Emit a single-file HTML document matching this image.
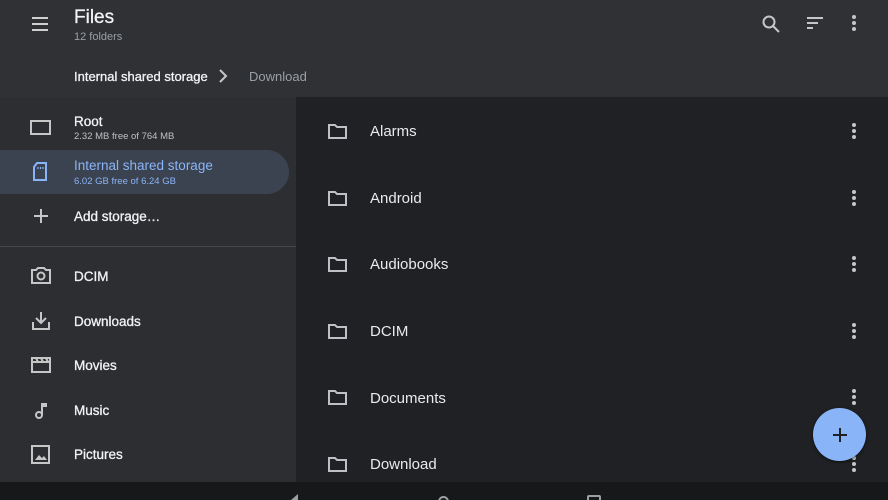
<!DOCTYPE html>
<html><head><style>
*{margin:0;padding:0;box-sizing:border-box}
html,body{width:888px;height:500px;overflow:hidden}
body{background:#202124;font-family:"Liberation Sans",sans-serif;color:#e8eaed;position:relative}
.hdr{position:absolute;left:0;top:0;width:888px;height:97px;background:#303134}
.side{position:absolute;left:0;top:97px;width:296px;height:386px;background:#2d2e31}
.nav{position:absolute;left:0;top:482px;width:888px;height:18px;background:#17181a;overflow:hidden}
.t{position:absolute;white-space:nowrap}
svg{position:absolute}
.ic{fill:none;stroke:#c4c7c5;stroke-width:2}
.it{font-size:13.5px;color:#f1f3f4;-webkit-text-stroke:0.3px #f1f3f4}
.sub{font-size:9.5px;color:#bdc1c6}
.fn{font-size:15px;color:#e8eaed}
</style></head><body>
<div class="hdr"></div>
<div class="side"></div>
<div class="nav">
<svg style="left:288px;top:12px" width="14" height="6"><path d="M10 0L3 6h7z" fill="#9aa0a6"/></svg>
<div style="position:absolute;left:438px;top:14px;width:11px;height:11px;border-radius:50%;border:2px solid #9aa0a6"></div>
<div style="position:absolute;left:587px;top:13px;width:14px;height:10px;border:2px solid #9aa0a6;border-radius:2px"></div>
</div>
<!-- header -->
<svg style="left:30px;top:15px" width="20" height="18"><path d="M2 3h16M2 9h16M2 15h16" stroke="#d0d0d0" stroke-width="2"/></svg>
<div class="t" style="left:74px;top:7px;font-size:19px;color:#f1f3f4;-webkit-text-stroke:0.3px #f1f3f4">Files</div>
<div class="t" style="left:74px;top:31px;font-size:11px;color:#9aa0a6">12 folders</div>
<svg style="left:760px;top:13px" width="22" height="22"><circle cx="9" cy="9" r="5.5" class="ic"/><path d="M13 13l6 6" class="ic"/></svg>
<svg style="left:805px;top:14px" width="22" height="20"><path d="M2 4h16M2 9h11M2 14h6" class="ic"/></svg>
<svg style="left:848px;top:13px" width="12" height="22"><circle cx="6" cy="4" r="2" fill="#c4c7c5"/><circle cx="6" cy="10" r="2" fill="#c4c7c5"/><circle cx="6" cy="16" r="2" fill="#c4c7c5"/></svg>
<div class="t it" style="left:74px;top:69px;font-size:13px">Internal shared storage</div>
<svg style="left:216px;top:68px" width="14" height="16"><path d="M4 2l6 6-6 6" class="ic" stroke="#e8eaed"/></svg>
<div class="t" style="left:249px;top:69px;font-size:13px;color:#9aa0a6">Download</div>
<!-- sidebar -->
<svg style="left:29px;top:118px" width="24" height="20"><rect x="2" y="3" width="19" height="13" class="ic" stroke-width="2.5"/></svg>
<div class="t it" style="left:74px;top:114px">Root</div>
<div class="t sub" style="left:74px;top:131px">2.32 MB free of 764 MB</div>
<div style="position:absolute;left:0;top:150px;width:289px;height:44px;background:#3c4350;border-radius:0 22px 22px 0"></div>
<svg style="left:31px;top:161px" width="20" height="22"><path d="M6 2h9v17H3V6z" fill="none" stroke="#8ab4f8" stroke-width="2"/><path d="M7 6v2M9.5 6v2M12 6v2" stroke="#8ab4f8" stroke-width="1.2"/></svg>
<div class="t" style="left:74px;top:158px;color:#8ab4f8;font-size:13.5px">Internal shared storage</div>
<div class="t sub" style="left:74px;top:176px;color:#8ab4f8">6.02 GB free of 6.24 GB</div>
<svg style="left:32px;top:207px" width="18" height="18"><path d="M9 2v14M2 9h14" class="ic"/></svg>
<div class="t it" style="left:74px;top:209px">Add storage…</div>
<div style="position:absolute;left:0;top:246px;width:296px;height:1px;background:#45474a"></div>
<svg style="left:30px;top:265px" width="22" height="20"><path d="M2 5h4l2-2h6l2 2h4v13H2z" class="ic"/><circle cx="11" cy="11" r="3.5" class="ic"/></svg>
<div class="t it" style="left:74px;top:269px">DCIM</div>
<svg style="left:30px;top:310px" width="22" height="22"><path d="M11 2v11M6 8l5 5 5-5M3 12v7h16v-7" class="ic"/></svg>
<div class="t it" style="left:74px;top:314px">Downloads</div>
<svg style="left:30px;top:355px" width="22" height="20"><path d="M2 3h18v14H2zM2 7h18M6 3l2 4M11 3l2 4M16 3l2 4" class="ic"/></svg>
<div class="t it" style="left:74px;top:358px">Movies</div>
<svg style="left:32px;top:400px" width="18" height="22"><path d="M10 3v12" class="ic"/><path d="M10 3h5v4h-5" fill="#c4c7c5"/><circle cx="7" cy="15" r="3" class="ic"/></svg>
<div class="t it" style="left:74px;top:403px">Music</div>
<svg style="left:30px;top:444px" width="22" height="22"><rect x="2" y="2" width="17" height="17" class="ic"/><path d="M5 16l4-5 3 3 2-2 3 4z" fill="#c4c7c5"/></svg>
<div class="t it" style="left:74px;top:447px">Pictures</div>
<!-- folders -->
<svg width="0" height="0"><defs><g id="f"><path d="M3 4h6l2 2h9v11H3z" fill="none" stroke="#bdc1c6" stroke-width="2"/></g></defs></svg>
<svg style="left:326px;top:121px" width="22" height="20"><use href="#f"/></svg>
<div class="t fn" style="left:370px;top:123px">Alarms</div>
<svg style="left:326px;top:188px" width="22" height="20"><use href="#f"/></svg>
<div class="t fn" style="left:370px;top:190px">Android</div>
<svg style="left:326px;top:254px" width="22" height="20"><use href="#f"/></svg>
<div class="t fn" style="left:370px;top:256px">Audiobooks</div>
<svg style="left:326px;top:321px" width="22" height="20"><use href="#f"/></svg>
<div class="t fn" style="left:370px;top:323px">DCIM</div>
<svg style="left:326px;top:387px" width="22" height="20"><use href="#f"/></svg>
<div class="t fn" style="left:370px;top:390px">Documents</div>
<svg style="left:326px;top:454px" width="22" height="20"><use href="#f"/></svg>
<div class="t fn" style="left:370px;top:456px">Download</div>
<svg width="0" height="0"><defs><g id="d"><circle cx="6" cy="3" r="2" fill="#c4c7c5"/><circle cx="6" cy="9" r="2" fill="#c4c7c5"/><circle cx="6" cy="15" r="2" fill="#c4c7c5"/></g></defs></svg>
<svg style="left:848px;top:122px" width="12" height="18"><use href="#d"/></svg>
<svg style="left:848px;top:189px" width="12" height="18"><use href="#d"/></svg>
<svg style="left:848px;top:255px" width="12" height="18"><use href="#d"/></svg>
<svg style="left:848px;top:322px" width="12" height="18"><use href="#d"/></svg>
<svg style="left:848px;top:388px" width="12" height="18"><use href="#d"/></svg>
<svg style="left:848px;top:455px" width="12" height="18"><use href="#d"/></svg>
<!-- FAB -->
<div style="position:absolute;left:813px;top:408px;width:53px;height:53px;border-radius:50%;background:#8ab4f8;box-shadow:0 1px 3px rgba(0,0,0,.6)"></div>
<svg style="left:831px;top:426px" width="18" height="18"><path d="M9 2v14M2 9h14" stroke="#202124" stroke-width="2"/></svg>
</body></html>
